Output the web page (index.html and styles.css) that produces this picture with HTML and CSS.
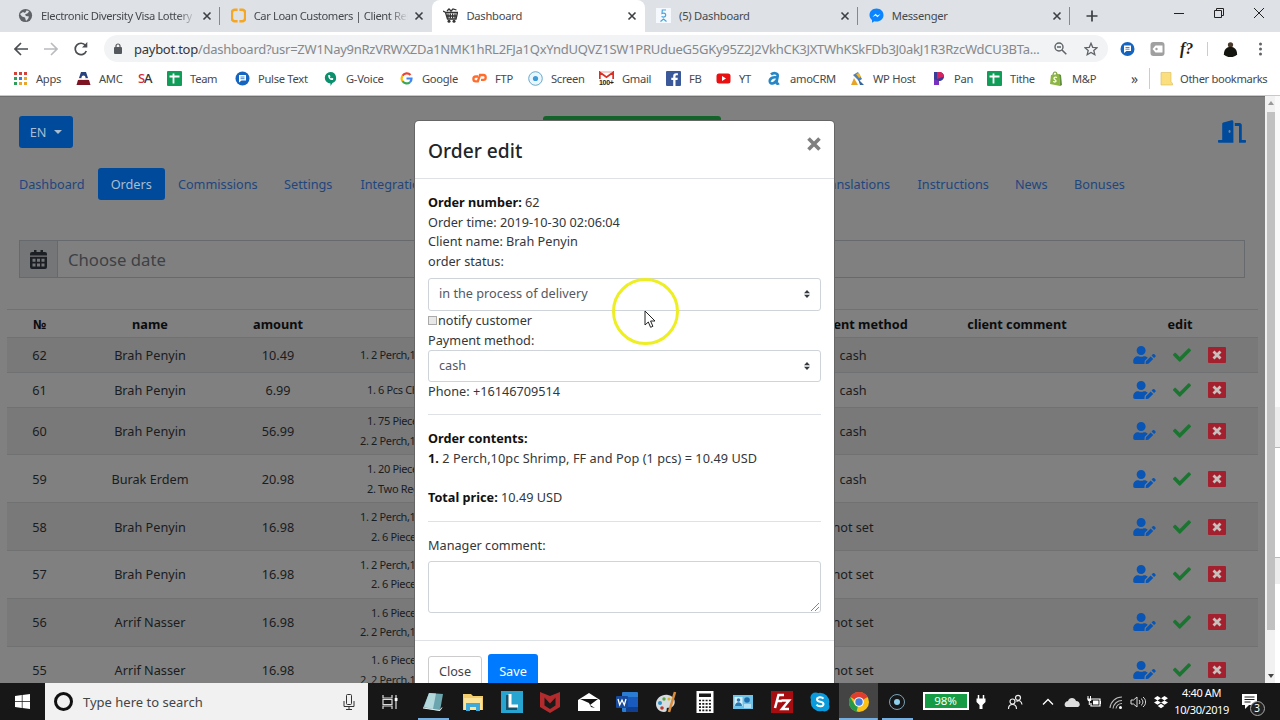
FILE: index.html
```html
<!DOCTYPE html>
<html lang="en">
<head>
    <meta charset="UTF-8">
    <meta name="viewport" content="width=device-width, initial-scale=1.0">
    <title>Dashboard</title>
    <link rel="stylesheet" href="styles.css">
</head>
<body>
    <svg class="sprite">
        <symbol id="user-edit" viewBox="0 0 640 512"><path d="M224 256c70.7 0 128-57.3 128-128S294.7 0 224 0 96 57.3 96 128s57.3 128 128 128zm89.6 32h-16.7c-22.2 10.2-46.9 16-72.9 16s-50.6-5.8-72.9-16h-16.7C60.2 288 0 348.2 0 422.4V464c0 26.5 21.5 48 48 48h274.9c-2.4-6.8-3.4-14-2.6-21.3l6.8-60.9 1.2-11.1 7.9-7.9 77.3-77.3c-24.5-27.7-60-45.5-99.9-45.5zm45.3 145.3l-6.8 61c-1.1 10.2 7.5 18.8 17.6 17.6l60.9-6.8 137.9-137.9-71.7-71.7-137.9 137.8zM633 268.9L595.1 231c-9.3-9.3-24.5-9.3-33.8 0l-37.8 37.8-4.1 4.1 71.8 71.7 41.8-41.8c9.3-9.4 9.3-24.5 0-33.9z"/></symbol>
        <symbol id="check" viewBox="0 0 512 512"><path d="M173.9 439.4l-166.4-166.4c-10-10-10-26.2 0-36.2l36.2-36.2c10-10 26.2-10 36.2 0L192 312.7 432.1 72.6c10-10 26.2-10 36.2 0l36.2 36.2c10 10 10 26.2 0 36.2l-294.4 294.4c-10 10-26.2 10-36.2 0z"/></symbol>
        <symbol id="remove" viewBox="0 0 18 16"><rect width="18" height="16" rx="1" fill="#a3202f"/><path d="M5.5 4.5l7 7M12.5 4.5l-7 7" stroke="#c9c0bd" stroke-width="2.8"/></symbol>
        <symbol id="tab-close" viewBox="0 0 10 10"><path d="M1.5 1.5l7 7M8.5 1.5l-7 7" stroke="#3c4043" stroke-width="1.6"/></symbol>
        <symbol id="sheet" viewBox="0 0 15 15"><rect width="15" height="15" rx="1" fill="#0f9d58"/><path d="M2.5 5.5h10M6.5 2.5v10" stroke="#fff" stroke-width="1.8"/></symbol>
        <symbol id="pulse" viewBox="0 0 15 15"><circle cx="7.500" cy="7.500" r="7" fill="#1565c0"/><path d="M4 4h7v5.500H6.500L4 11.500z" fill="#fff"/><path d="M5.500 6h4M5.500 7.700h4" stroke="#1565c0" stroke-width=".8"/></symbol>
        <symbol id="carets" viewBox="0 0 6 8"><path d="M3 0l3 3.300H0zM3 8L0 4.700h6z" fill="#343a40"/></symbol>
    </svg>

    <div class="desktop">
        <div class="tabs">
            <div class="tab">
                <svg class="favicon" viewBox="0 0 15 15"><circle cx="7.500" cy="7.500" r="6.600" fill="#5f6368"/><path d="M2 6l3-2 2 1 1.500-2.500L11 3l-1 2-3 1.500L8 8l3 .5-1 2.500-2 2-1-3.500-3-1z" fill="#dee1e6"/></svg>
                <span class="tab-title faded">Electronic Diversity Visa Lottery</span>
                <svg class="tab-x"><use href="#tab-close"/></svg>
            </div>
            <div class="tab">
                <svg class="favicon" viewBox="0 0 15 15"><rect x=".8" y="1.800" width="13.400" height="11.400" rx="3" fill="none" stroke="#f5a623" stroke-width="2.600"/><path d="M7.500 0v3.500M7.500 11.500V15" stroke="#dee1e6" stroke-width="1.800"/></svg>
                <span class="tab-title faded">Car Loan Customers | Client Rel</span>
                <svg class="tab-x"><use href="#tab-close"/></svg>
            </div>
            <div class="tab active">
                <svg class="favicon" viewBox="0 0 15 15"><path d="M0 3l3 1.500h11.500L13 11H4.500L2.500 4.500M4 3l2-2 2 2 2-2 3.500 1" fill="none" stroke="#333" stroke-width="1.300"/><path d="M5 5.500v5M7.300 5.500v5M9.600 5.500v5M12 5.500v5M4 8h9" stroke="#333" stroke-width="1.300"/><circle cx="6" cy="13.300" r="1.500" fill="#333"/><circle cx="11" cy="13.300" r="1.500" fill="#333"/></svg>
                <span class="tab-title">Dashboard</span>
                <svg class="tab-x"><use href="#tab-close"/></svg>
            </div>
            <div class="tab">
                <svg class="favicon" viewBox="0 0 15 15"><rect width="15" height="15" fill="#f5f9fd"/><path d="M10 2H6.300L6 5.500c2-1 4 0 3.700 1.800S7.500 9.500 5.500 8.500M4.500 13.500L7.500 11l3 2.500" fill="none" stroke="#4ba3dc" stroke-width="1.200"/></svg>
                <span class="tab-title">(5) Dashboard</span>
                <svg class="tab-x"><use href="#tab-close"/></svg>
            </div>
            <div class="tab">
                <svg class="favicon" viewBox="0 0 15 15"><path d="M7.500.5C3.500.5.5 3.400.5 7c0 2 1 3.700 2.500 5v2.700l2.400-1.400c4.800 1.200 9.100-1.800 9.100-6.300C14.500 3.400 11.500.5 7.500.5z" fill="#0a84ff"/><path d="M3.500 9l3-3.200 2 1.700L11.500 6l-3 3.200-2-1.700z" fill="#fff"/></svg>
                <span class="tab-title">Messenger</span>
                <svg class="tab-x"><use href="#tab-close"/></svg>
            </div>
            <svg class="new-tab" viewBox="0 0 12 12"><path d="M6 .5v11M.5 6h11" stroke="#3c4043" stroke-width="1.700"/></svg>
            <div class="window-buttons">
                <svg viewBox="0 0 10 10"><path d="M0 5.500h10" stroke="#222"/></svg>
                <svg viewBox="0 0 10 10"><path d="M.5 2.500h7v7h-7zM2.500 2.500v-2h7v7h-2" fill="none" stroke="#222"/></svg>
                <svg viewBox="0 0 10 10"><path d="M0 0l10 10M10 0L0 10" stroke="#222"/></svg>
            </div>
        </div>

        <div class="toolbar">
            <svg class="nav-icon" viewBox="0 0 14 14"><path d="M14 7H1.500M7 1L1 7l6 6" fill="none" stroke="#4a4d51" stroke-width="1.700"/></svg>
            <svg class="nav-icon" viewBox="0 0 14 14"><path d="M0 7h12.500M7 1l6 6-6 6" fill="none" stroke="#b9bbbe" stroke-width="1.600"/></svg>
            <svg class="nav-icon" viewBox="0 0 14 14"><path d="M12.300 9A5.700 5.700 0 1 1 11.500 3.500" fill="none" stroke="#4a4d51" stroke-width="1.700"/><path d="M13.300 0v5.500H8z" fill="#4a4d51"/></svg>
            <div class="address">
                <svg class="lock" viewBox="0 0 8 11"><rect y="4" width="8" height="7" rx="1" fill="#55585c"/><path d="M2 4.500V3a2 2 0 0 1 4 0v1.500" fill="none" stroke="#55585c" stroke-width="1.200"/></svg>
                <span class="url"><b>paybot.top</b>/dashboard?usr=ZW1Nay9nRzVRWXZDa1NMK1hRL2FJa1QxYndUQVZ1SW1PRUdueG5GKy95Z2J2VkhCK3JXTWhKSkFDb3J0akJ1R3RzcWdCU3BTa...</span>
                <svg class="zoom-icon" viewBox="0 0 13 13"><circle cx="5" cy="5" r="4" fill="none" stroke="#5f6368" stroke-width="1.400"/><path d="M3 5h4M8 8l4.300 4.300" stroke="#5f6368" stroke-width="1.500"/></svg>
                <svg class="star" viewBox="0 0 14 14"><path d="M7 1.300l1.700 4 4.300.4-3.200 2.800 1 4.200L7 10.500l-3.800 2.200 1-4.200L1 5.700l4.300-.4z" fill="none" stroke="#5f6368" stroke-width="1.300"/></svg>
            </div>
            <div class="extensions">
                <svg viewBox="0 0 15 15"><use href="#pulse"/></svg>
                <svg viewBox="0 0 15 15"><rect x=".5" y=".5" width="14" height="14" rx="3" fill="#a0a0a0"/><path d="M2.500 7.500L5.500 4h7v7h-7z" fill="#fff"/><circle cx="6.500" cy="7.500" r="1.200" fill="#a0a0a0"/></svg>
                <span class="ext-f">f?</span>
                <span class="divider"></span>
                <svg viewBox="0 0 15 17"><circle cx="7.500" cy="4" r="2.800" fill="#4b3a2a"/><path d="M.5 14c0-5 3-8 7-8s7 3 7 8c-2 4-12 4-14 0z" fill="#15150f"/></svg>
                <svg viewBox="0 0 15 15"><g fill="#5f6368"><circle cx="7.500" cy="2.500" r="1.500"/><circle cx="7.500" cy="7.500" r="1.500"/><circle cx="7.500" cy="12.500" r="1.500"/></g></svg>
            </div>
        </div>

        <div class="bookmarks">
            <div class="bm"><svg viewBox="0 0 15 15"><g fill="#d0433a"><rect x="1" y="1" width="3" height="3"/><rect x="6" y="1" width="3" height="3"/><rect x="11" y="1" width="3" height="3"/></g><rect x="1" y="6" width="3" height="3" fill="#2e9e58"/><rect x="6" y="6" width="3" height="3" fill="#3b78e7"/><rect x="11" y="6" width="3" height="3" fill="#e8a72b"/><rect x="1" y="11" width="3" height="3" fill="#2e9e58"/><g fill="#e8a72b"><rect x="6" y="11" width="3" height="3"/><rect x="11" y="11" width="3" height="3"/></g></svg>Apps</div>
            <div class="bm"><svg viewBox="0 0 15 15"><path d="M5 1h5l2 6H3z" fill="#27427c"/><path d="M3 7h9l1 3H2z" fill="#e8e0e0"/><path d="M2 9h11l1.500 5H.5z" fill="#7c1521"/><circle cx="7.500" cy="6.500" r="2" fill="#fff"/></svg>AMC</div>
            <div class="bm sa"><span>S</span>A</div>
            <div class="bm"><svg><use href="#sheet"/></svg>Team</div>
            <div class="bm"><svg><use href="#pulse"/></svg>Pulse Text</div>
            <div class="bm"><svg viewBox="0 0 15 15"><path d="M7.500 1a5.700 5.700 0 0 1 2 11l-2 3v-2.600A5.700 5.700 0 0 1 7.500 1z" fill="#0b8f6d"/><path d="M5.300 4c-.5 3 1.700 5.300 4.700 5l.3-1.500-1.500-.7-.8.7-1.200-1.200.7-.8L6.800 4z" fill="#fff"/></svg>G-Voice</div>
            <div class="bm"><svg viewBox="0 0 15 15" fill="none" stroke-width="2.200"><path d="M11.500 4A5 5 0 0 0 3.500 4.800" stroke="#ea4335"/><path d="M3.500 4.800a5 5 0 0 0 0 5.400" stroke="#fbbc05"/><path d="M3.500 10.200a5 5 0 0 0 7.500 1" stroke="#34a853"/><path d="M11 11.200a5 5 0 0 0 1.500-3.700H7.500" stroke="#4285f4"/></svg>Google</div>
            <div class="bm"><svg viewBox="0 0 15 15"><path d="M6 5.500H3.800a2.400 2.400 0 0 0 0 4.800h2L8 4h3.300a2.400 2.400 0 0 1 0 4.800H9" fill="none" stroke="#ff6c2c" stroke-width="2.300"/></svg>FTP</div>
            <div class="bm"><svg viewBox="0 0 15 15"><circle cx="7.500" cy="7.500" r="6.800" fill="#eaf6fc" stroke="#5b9fc5" stroke-width=".9"/><circle cx="7.500" cy="7.500" r="2.600" fill="#3d9bd8"/></svg>Screen</div>
            <div class="bm gmail"><svg viewBox="0 0 15 15"><path d="M.8 8V1.200l6.700 5 6.700-5V8" fill="none" stroke="#d93025" stroke-width="1.800"/><path d="M2 1h11" stroke="#e9a29c"/></svg><i>100+</i>Gmail</div>
            <div class="bm"><svg viewBox="0 0 15 15"><rect width="15" height="15" rx="1" fill="#3b5998"/><path d="M9.500 15V9h2l.3-2.200H9.500V5.500c0-.7.3-1.200 1.200-1.200h1.200V2.200h-1.700C8 2.200 7.200 3.500 7.200 5.200v1.600H5.300V9h1.900v6z" fill="#fff"/></svg>FB</div>
            <div class="bm"><svg viewBox="0 0 15 15"><rect x=".5" y="2.500" width="14" height="10" rx="2.500" fill="#e81010"/><path d="M6 5l4 2.500L6 10z" fill="#fff"/></svg>YT</div>
            <div class="bm"><svg viewBox="0 0 15 15"><path d="M4 3.500C6 1.500 11 1.500 10.700 5L9.500 11.500c0 1.500 1.500 1.500 2.500.8M10 6.500C6 5.500 2.500 7.500 2.800 10.500c.4 3 5 2.500 6.700-1.500" fill="none" stroke="#2585c5" stroke-width="2.600"/></svg>amoCRM</div>
            <div class="bm"><svg viewBox="0 0 15 15"><path d="M3 4l5-3 4 7-3 2z" fill="#4e7fb5"/><path d="M6 3l3-1 2 4-2 1z" fill="#f0b52d"/><path d="M1 14l3-7 4 7z" fill="#e7a528"/><path d="M8 8l6 6h-4z" fill="#35679c"/></svg>WP Host</div>
            <div class="bm"><svg viewBox="0 0 15 15"><path d="M3 1h5c3 0 5 2 5 4.500S11 10 8 10v4H3z" fill="#3b3b98"/><path d="M6 1h2c3 0 5 2 5 4.500L6 8z" fill="#d5245f"/><path d="M3 8l5 2v4H3z" fill="#7a2fc0"/></svg>Pan</div>
            <div class="bm"><svg><use href="#sheet"/></svg>Tithe</div>
            <div class="bm"><svg viewBox="0 0 15 15"><path d="M2 4l8-1 1 12-10-2z" fill="#8db543"/><path d="M10 3l2 1 1 10-2 1z" fill="#5e8e3e"/><path d="M4 4c0-4 4-4 4 0" fill="none" stroke="#7ba03a" stroke-width="1.200"/><path d="M8 6.500c-2-1-3 0-3 1 0 1.300 2.300 1.200 2 2.700-.2 1-2 1-2.800.2" fill="none" stroke="#fff" stroke-width="1.300"/></svg>M&amp;P</div>
            <div class="bm more">»</div>
            <div class="bm other"><svg viewBox="0 0 15 15"><path d="M2 1.500h10v9l1.500 2v1.500H2z" fill="#fbdf7e" stroke="#d9bb5d" stroke-width=".6"/></svg>Other bookmarks</div>
        </div>

        <div class="viewport">
            <div class="page">
                <div class="page-top">
                    <button class="lang">EN <span class="caret"></span></button>
                    <div class="create"></div>
                    <svg class="door" viewBox="0 0 640 512"><path d="M624 448h-80V113.500C544 86.200 522.500 64 496 64H384v64h96v384h144c8.800 0 16-7.200 16-16v-32c0-8.800-7.200-16-16-16zM312.200 1l-192 49.700C106 54.400 96 67.700 96 82.900V448H16c-8.800 0-16 7.200-16 16v32c0 8.800 7.200 16 16 16h336V33.200C352 11.600 332.400-4.200 312.200 1zM264 288c-13.300 0-24-14.300-24-32s10.700-32 24-32 24 14.300 24 32-10.700 32-24 32z"/></svg>
                </div>

                <div class="nav">
                    <a>Dashboard</a>
                    <a class="current">Orders</a>
                    <a>Commissions</a>
                    <a>Settings</a>
                    <a>Integrations</a>
                    <span></span>
                    <a>Translations</a>
                    <a>Instructions</a>
                    <a>News</a>
                    <a>Bonuses</a>
                </div>

                <div class="date-field">
                    <div class="date-icon"><svg viewBox="0 0 17 19"><path d="M2 2h2V0h2.500v2h4V0H13v2h2a2 2 0 0 1 2 2v1.500H0V4a2 2 0 0 1 2-2zM0 6.700h17V17a2 2 0 0 1-2 2H2a2 2 0 0 1-2-2z" fill="#1c2024"/><path d="M2.500 8.700h3v3h-3zM7 8.700h3v3H7zM11.500 8.700h3v3h-3zM2.500 13.500h3v3h-3zM7 13.500h3v3H7zM11.500 13.500h3v3h-3z" fill="#747678"/></svg></div>
                    <div class="date-input">Choose date</div>
                </div>

                <div class="orders">
                    <div class="row head"><div>№</div><div>name</div><div>amount</div><div></div><div>payment method</div><div>client comment</div><div>edit</div></div>
                    <div class="row odd"><div>62</div><div>Brah Penyin</div><div>10.49</div><div class="items"><p>1. 2 Perch,10</p></div><div>cash</div><div></div><div class="actions"><svg class="edit"><use href="#user-edit"/></svg><svg class="done"><use href="#check"/></svg><svg class="del"><use href="#remove"/></svg></div></div>
                    <div class="row"><div>61</div><div>Brah Penyin</div><div>6.99</div><div class="items"><p class="in-1">1. 6 Pcs Ch</p></div><div>cash</div><div></div><div class="actions"><svg class="edit"><use href="#user-edit"/></svg><svg class="done"><use href="#check"/></svg><svg class="del"><use href="#remove"/></svg></div></div>
                    <div class="row odd tall"><div>60</div><div>Brah Penyin</div><div>56.99</div><div class="items"><p class="in-1">1. 75 Piece</p><p>2. 2 Perch,1</p></div><div>cash</div><div></div><div class="actions"><svg class="edit"><use href="#user-edit"/></svg><svg class="done"><use href="#check"/></svg><svg class="del"><use href="#remove"/></svg></div></div>
                    <div class="row tall"><div>59</div><div>Burak Erdem</div><div>20.98</div><div class="items"><p class="in-1">1. 20 Piece</p><p class="in-1">2. Two Reg</p></div><div>cash</div><div></div><div class="actions"><svg class="edit"><use href="#user-edit"/></svg><svg class="done"><use href="#check"/></svg><svg class="del"><use href="#remove"/></svg></div></div>
                    <div class="row odd tall"><div>58</div><div>Brah Penyin</div><div>16.98</div><div class="items"><p>1. 2 Perch,1</p><p class="in-2">2. 6 Piece</p></div><div>not set</div><div></div><div class="actions"><svg class="edit"><use href="#user-edit"/></svg><svg class="done"><use href="#check"/></svg><svg class="del"><use href="#remove"/></svg></div></div>
                    <div class="row tall"><div>57</div><div>Brah Penyin</div><div>16.98</div><div class="items"><p>1. 2 Perch,1</p><p class="in-2">2. 6 Piece</p></div><div>not set</div><div></div><div class="actions"><svg class="edit"><use href="#user-edit"/></svg><svg class="done"><use href="#check"/></svg><svg class="del"><use href="#remove"/></svg></div></div>
                    <div class="row odd tall"><div>56</div><div>Arrif Nasser</div><div>16.98</div><div class="items"><p class="in-2">1. 6 Piece</p><p>2. 2 Perch,1</p></div><div>not set</div><div></div><div class="actions"><svg class="edit"><use href="#user-edit"/></svg><svg class="done"><use href="#check"/></svg><svg class="del"><use href="#remove"/></svg></div></div>
                    <div class="row tall"><div>55</div><div>Arrif Nasser</div><div>16.98</div><div class="items"><p class="in-2">1. 6 Piece</p><p>2. 2 Perch,1</p></div><div>not set</div><div></div><div class="actions"><svg class="edit"><use href="#user-edit"/></svg><svg class="done"><use href="#check"/></svg><svg class="del"><use href="#remove"/></svg></div></div>
                </div>
            </div>

            <div class="scrollbar">
                <span class="scroll-up"></span>
                <span class="thumb"></span>
                <span class="scroll-down"></span>
            </div>
            <div class="window-behind"></div>

            <div class="modal">
                <div class="modal-header">
                    <h5>Order edit</h5>
                    <svg class="modal-close" viewBox="0 0 14 14"><path d="M1.500 1.500l11 11M12.500 1.500l-11 11" stroke="#7f7f7f" stroke-width="3.600"/></svg>
                </div>
                <div class="modal-body">
                    <p><b>Order number:</b> 62</p>
                    <p>Order time: 2019-10-30 02:06:04</p>
                    <p>Client name: Brah Penyin</p>
                    <p>order status:</p>
                    <div class="select status">in the process of delivery<svg><use href="#carets"/></svg></div>
                    <p class="notify"><span class="checkbox"></span>notify customer</p>
                    <p>Payment method:</p>
                    <div class="select">cash<svg><use href="#carets"/></svg></div>
                    <p>Phone: +16146709514</p>
                    <hr>
                    <p><b>Order contents:</b></p>
                    <p class="content-line"><b>1.</b> 2 Perch,10pc Shrimp, FF and Pop (1 pcs) = 10.49 USD</p>
                    <p><b>Total price:</b> 10.49 USD</p>
                    <hr>
                    <p>Manager comment:</p>
                    <div class="comment"><svg viewBox="0 0 8 8"><path d="M0 8l8-8M4 8l4-4" stroke="#777" stroke-width=".9"/></svg></div>
                </div>
                <div class="modal-footer">
                    <button class="btn-close">Close</button>
                    <button class="btn-save">Save</button>
                </div>
            </div>

            <div class="click-ring"></div>
            <svg class="cursor" viewBox="0 0 12 19"><path d="M1 1v14l3.300-3 2.300 5.300 2.300-1L6.600 11H11z" fill="#fff" stroke="#222" stroke-width="1"/></svg>
        </div>

        <div class="taskbar">
            <div class="start"><svg viewBox="0 0 15 15"><path d="M0 2l6.800-1v6.200H0zM7.500.9L15 0v7.200H7.500zM0 7.900h6.800V14L0 13zM7.500 7.900H15V15l-7.500-1z" fill="#fff"/></svg></div>
            <div class="search">
                <span class="cortana"></span>
                <span class="search-text">Type here to search</span>
                <svg viewBox="0 0 12 16"><rect x="3.500" y=".5" width="5" height="10" rx="1" fill="none" stroke="#333"/><path d="M1 7v5.500h10V7M6 12.500v3M3 15.500h6" fill="none" stroke="#333"/></svg>
            </div>
            <div class="apps">
                <div><svg viewBox="0 0 16 16"><path d="M1 1v3h9V1M1 15v-3h9v3M1 5.500h9v5H1zM14 1v14" fill="none" stroke="#ddd" stroke-width="1.200"/><rect x="12.700" y="4" width="2.800" height="3" fill="#fff"/></svg></div>
                <div class="running"><svg class="big" viewBox="0 0 22 22"><path d="M7 2l14 1-3 17-17-3z" fill="#6ba5ae"/><path d="M7 2l7 .5L11 18 2 16z" fill="#b3d9dc"/><path d="M1 17l17 2.500 2-3" fill="none" stroke="#e8eded"/></svg></div>
                <div><svg class="big" viewBox="0 0 22 22"><path d="M1 3h8l2 2h10v14H1z" fill="#f3cd6b"/><path d="M2 7h18v12H2z" fill="#fbe39a"/><path d="M4 20v-8h14v8h-4v-4H8v4z" fill="#3fa9d9"/></svg></div>
                <div><svg class="big" viewBox="0 0 22 22"><rect width="22" height="22" fill="#27a4cf"/><path d="M7 4v13h9" fill="none" stroke="#17546b" stroke-width="4"/><path d="M9 3v12h8" fill="none" stroke="#fff" stroke-width="3"/></svg></div>
                <div><svg class="big" viewBox="0 0 22 22"><path d="M1 1l10 4 10-4v15l-10 6-10-6z" fill="#b32b2d"/><path d="M5.500 6.500l5.500 4 5.500-4v8L11 18l-5.500-3.500z" fill="#1a1a1a"/><path d="M5.500 6.500l5.500 2.500 5.500-2.500-5.500 6z" fill="#b32b2d"/></svg></div>
                <div><svg class="big" viewBox="0 0 22 20"><path d="M0 8l11-7 11 7v11H0z" fill="#fff"/><path d="M2 7h18l-8 6-1-2zM12 13l5 3-4-1z" fill="#111"/></svg></div>
                <div><svg class="big" viewBox="0 0 22 22"><rect x="6" y="1" width="16" height="20" rx="1" fill="#2b7cd3"/><path d="M6 6h16v10H6z" fill="#185abd"/><path d="M10 16h12v5H10z" fill="#103f91"/><rect y="5" width="12" height="12" rx="1" fill="#174a9c"/><path d="M2 8l1.700 6L6 9l2.300 5L10 8" fill="none" stroke="#fff" stroke-width="1.300"/></svg></div>
                <div><svg class="big" viewBox="0 0 22 22"><path d="M1 13C1 7 7 3 13 4s8 6 6 10-6 2-7 3 1 4-3 4c-5 0-8-4-8-8z" fill="#d5dce0"/><circle cx="5" cy="12" r="2" fill="#2a8fc7"/><circle cx="9" cy="8" r="1.700" fill="#5aa546"/><circle cx="14" cy="8" r="1.600" fill="#d9b42a"/><circle cx="7" cy="17" r="1.800" fill="#c0392b"/><path d="M20 1L14 21" stroke="#d98c3b" stroke-width="2.600"/></svg></div>
                <div><svg class="big" viewBox="0 0 22 22"><rect x="2.500" width="17" height="22" fill="#fff"/><rect x="5" y="2.500" width="12" height="3.500" fill="#1a1a1a"/><path d="M5 9.500h12M5 12.800h12M5 16.100h12M5 19.400h12" stroke="#1a1a1a" stroke-width="1.700" stroke-dasharray="2 1.300"/></svg></div>
                <div><svg class="big" viewBox="0 0 22 22"><rect x="1" y="4" width="20" height="14" fill="#6fc3e8"/><rect x="2.500" y="6" width="8" height="9" fill="#d7eefa"/><circle cx="6.500" cy="9" r="1.800" fill="#2979b0"/><path d="M3 15c0-5 7-5 7 0z" fill="#2979b0"/><circle cx="15" cy="9" r="2.800" fill="#1f6fae"/><path d="M12 14h7M12 16h7" stroke="#fff"/></svg></div>
                <div><svg class="big" viewBox="0 0 22 22"><rect width="22" height="22" fill="#a50d10"/><path d="M13 4H7.500L4 17M6 10h5M10.500 9.500H18l-7 8.500h7" fill="none" stroke="#fff" stroke-width="2.500"/></svg></div>
                <div><svg class="big" viewBox="0 0 22 22"><circle cx="11" cy="11" r="9.300" fill="#0a9bdc"/><circle cx="6.500" cy="6.500" r="5" fill="#0a9bdc"/><circle cx="15.500" cy="15.500" r="5" fill="#0a9bdc"/><path d="M14.500 7.700c-2-2.500-6.500-1.700-6.500.8 0 3 6.500 1.500 6.500 4.500 0 2.700-5 3.200-7 .6" fill="none" stroke="#fff" stroke-width="2"/></svg></div>
                <div class="running front"><svg class="big" viewBox="0 0 22 22"><circle cx="11" cy="11" r="10" fill="#fbc116"/><path d="M11 11L2.300 6A10 10 0 0 1 19.700 6z" fill="#df3d30"/><path d="M11 11l-2.500 9.700A10 10 0 0 1 2.300 6L7 14z" fill="#279847"/><circle cx="11" cy="11" r="4.800" fill="#fff"/><circle cx="11" cy="11" r="3.700" fill="#3f7de0"/></svg></div>
                <div class="running"><svg class="big" viewBox="0 0 22 22"><circle cx="11" cy="11" r="7.500" fill="none" stroke="#7aa1b5"/><circle cx="11" cy="11" r="3" fill="#8ed1ee"/></svg></div>
            </div>
            <div class="battery">98%</div>
            <div class="tray">
                <svg viewBox="0 0 16 16"><path d="M5.500 1v4M10.500 1v4" stroke="#fff" stroke-width="1.500"/><path d="M3.500 4.500h9V8l-3 3v4h-3v-4l-3-3z" fill="#fff"/></svg>
                <svg viewBox="0 0 16 16"><g fill="none" stroke="#eee" stroke-width="1.200"><circle cx="5.500" cy="7.500" r="2.500"/><path d="M1.500 15c0-6 8-6 8 0"/><circle cx="11" cy="3.800" r="2.500"/><path d="M9.500 7.500c3-2 5 0 5.500 3"/></g></svg>
                <svg viewBox="0 0 16 16"><path d="M3 10.500l5-5 5 5" fill="none" stroke="#fff" stroke-width="1.300"/></svg>
                <svg viewBox="0 0 16 16"><path d="M1 12a3.500 3.500 0 0 1 3-5c1-4 7-4 8 0 4 0 5 5 2 6H2z" fill="#ddd"/></svg>
                <svg viewBox="0 0 16 16"><path d="M6 5h8v7H5V9" fill="none" stroke="#fff" stroke-width="1.200"/><path d="M7 6.500h5.500v4H7z" fill="#fff"/><path d="M14.500 7v3M2 2v3M4.500 2v3M3.300 7v4" stroke="#fff"/><path d="M1 4.500h5L5 7H2z" fill="#fff"/></svg>
                <svg viewBox="0 0 16 16"><g fill="none" stroke="#bbb" stroke-width="1.100"><path d="M2 14A12 12 0 0 1 14 3M5 14.500A9 9 0 0 1 14 6.500M8 14.500a6 6 0 0 1 6-5"/></g><circle cx="12.500" cy="13.500" r="1.500" fill="#fff"/></svg>
                <svg viewBox="0 0 16 16"><path d="M1 6h2.500L7 3v10l-3.500-3H1zM9 6c1.200 1 1.200 3 0 4M11 4.500c2.500 2 2.500 5 0 7M13 3c3.500 3 3.500 7 0 10" fill="none" stroke="#ddd"/></svg>
                <svg viewBox="0 0 16 16"><path d="M4.500 2L8 4.200 4.500 6.400 1 4.200zM11.500 2L15 4.200l-3.500 2.200L8 4.200zM4.500 6.400L8 8.600l-3.500 2.200L1 8.600zM11.500 6.400L15 8.600l-3.500 2.200L8 8.600zM8 9.800l3.300 2.200L8 14.200 4.700 12z" fill="#fff"/></svg>
            </div>
            <div class="clock">4:40 AM<br>10/30/2019</div>
            <div class="notifications"><svg viewBox="0 0 17 17"><path d="M1 1h15v11H8l-4 4v-4H1z" fill="#fff"/><path d="M3.500 4h10M3.500 6.500h10M3.500 9h6" stroke="#1a1a1a"/></svg><span>3</span></div>
        </div>
    </div>
</body>
</html>
```
FILE: styles.css
```css
* {
    box-sizing: border-box;
}

body {
    margin: 0;
    font-family: 'Noto Sans', 'Open Sans', sans-serif;
    font-size: 12.7px;
    color: #212529;
}

p, h5 {
    margin: 0;
}

button {
    font: inherit;
    border: none;
    border-radius: 3px;
    padding: 0;
}

.sprite {
    display: none;
}

.desktop {
    width: 1280px;
    height: 720px;
    display: flex;
    flex-direction: column;
    overflow: hidden;
    background: #fff;
}

/* browser tabs */
.tabs {
    height: 32px;
    flex: none;
    background: #dee1e6;
    display: flex;
    align-items: center;
    padding: 0 0 1px 7px;
    font-size: 11.2px;
    letter-spacing: -0.25px;
    color: #45494d;
}

.tab {
    width: 212.7px;
    height: 32px;
    display: flex;
    align-items: center;
    padding: 0 8px 0 11px;
    background: linear-gradient(#888, #888) right center / 1px 18px no-repeat;
}

.tab:nth-child(2) {
    background: none;
}

.tab.active {
    background: #fff;
    border-radius: 8px 8px 0 0;
}

.favicon {
    width: 15px;
    height: 15px;
    flex: none;
    margin-right: 8px;
}

.tab-title {
    flex: 1;
    white-space: nowrap;
    overflow: hidden;
}

.tab-title.faded {
    margin-right: 6px;
    letter-spacing: -0.4px;
    mask-image: linear-gradient(to right, #000 88%, transparent);
}

.tab-x {
    width: 10px;
    height: 10px;
    flex: none;
}

.new-tab {
    width: 12px;
    height: 12px;
    margin-left: 16px;
}

.window-buttons {
    margin-left: auto;
    display: flex;
    gap: 30px;
    padding: 0 16px 5px 0;
}

.window-buttons svg {
    width: 10px;
    height: 10px;
}

/* toolbar */
.toolbar {
    height: 33px;
    flex: none;
    display: flex;
    align-items: center;
    padding-left: 14px;
}

.nav-icon {
    width: 14px;
    height: 14px;
    margin-right: 16px;
}

.address {
    width: 1004px;
    height: 27px;
    border-radius: 14px;
    background: #f1f3f4;
    display: flex;
    align-items: center;
    padding: 0 10px;
}

.lock {
    width: 8px;
    height: 11px;
    margin-right: 12px;
}

.url {
    width: 920px;
    font-size: 13px;
    letter-spacing: -0.26px;
    white-space: nowrap;
    color: #85888c;
}

.url b {
    font-weight: normal;
    color: #333639;
}

.zoom-icon {
    width: 13px;
    height: 13px;
    margin-right: 17px;
}

.star {
    width: 14px;
    height: 14px;
}

.extensions {
    margin-left: 12px;
    display: flex;
    align-items: center;
    gap: 15px;
}

.extensions svg {
    width: 15px;
    height: 16px;
}

.ext-f {
    width: 16px;
    font: italic bold 16px 'Liberation Serif', serif;
    color: #222;
}

.divider {
    width: 1px;
    height: 14px;
    background: #ccc;
    margin-left: -4px;
}

/* bookmarks bar */
.bookmarks {
    height: 31px;
    flex: none;
    display: grid;
    grid-template-columns: 63px 61px 30px 68px 88px 76px 73px 56px 71px 67px 50px 51px 83px 81px 56px 62px 79px 27px 120px;
    padding-left: 13px;
    font-size: 11.2px;
    letter-spacing: -0.3px;
    color: #45494d;
    white-space: nowrap;
    border-bottom: 1px solid #c8c8c8;
}

.bm {
    position: relative;
    display: flex;
    align-items: center;
    padding-bottom: 4px;
}

.bm svg {
    width: 15px;
    height: 15px;
    margin-right: 8px;
    flex: none;
}

.bm.sa {
    padding-left: 1px;
    font-size: 13px;
    letter-spacing: -1.2px;
    font-weight: 500;
    color: #333;
}

.bm.sa span {
    color: #d22b3c;
}

.bm.gmail i {
    position: absolute;
    left: 0;
    top: 14px;
    font: bold 7px/8px 'Liberation Sans', sans-serif;
    color: #222;
}

.bm.more {
    padding-left: 3px;
    font-size: 14px;
}

.bm.other {
    padding-left: 9px;
    margin: 3px 0 6px -6px;
    padding-bottom: 0;
    letter-spacing: -0.35px;
    border-left: 1px solid #ccc;
}

.bm.other svg {
    margin-right: 6px;
}

/* page under the dark backdrop */
.viewport {
    height: 587px;
    flex: none;
    display: flex;
    position: relative;
    overflow: hidden;
}

.page {
    width: 1265px;
    background: #808080;
    overflow: hidden;
    border-top: 1px solid #6e6e6e;
}

.page-top {
    display: flex;
    height: 71px;
    padding: 19px 19px 0;
    align-items: flex-start;
}

.lang {
    width: 54px;
    height: 32px;
    background: #004a9c;
    color: #a9bcd0;
    display: flex;
    align-items: center;
    justify-content: center;
    gap: 8px;
}

.caret {
    border: 4px solid transparent;
    border-top-color: #a9bcd0;
    border-bottom: none;
}

.create {
    width: 178px;
    height: 32px;
    margin-left: 470px;
    border-radius: 3px;
    background: #14632b;
}

.door {
    width: 28px;
    height: 23px;
    margin: 4px 0 0 auto;
    fill: #004a9c;
}

.nav {
    width: 1132px;
    margin-left: 6px;
    height: 32px;
    display: grid;
    grid-template-columns: 91.5px 67.5px 105.5px 75.5px 102px 1fr 102px 96.5px 59.5px 77px;
    align-items: center;
    text-align: center;
    color: #1f467e;
}

.nav .current {
    background: #004a9c;
    color: #a9bcd0;
    border-radius: 3px;
    line-height: 32px;
}

.date-field {
    margin: 40px 20px 0 19px;
    height: 38px;
    display: flex;
    border: 1px solid #676a6d;
}

.date-icon {
    width: 38px;
    background: #747678;
    border-right: 1px solid #676a6d;
    display: flex;
    align-items: center;
    justify-content: center;
}

.date-icon svg {
    width: 17px;
    height: 19px;
}

.date-input {
    padding-left: 10px;
    font-size: 16.7px;
    line-height: 38px;
    color: #3d4145;
}

.orders {
    margin: 31px 7px 0;
    color: #1a1c1f;
}

.row {
    height: 34.7px;
    display: grid;
    grid-template-columns: 65px 156px 100px 446px 158px 170px 156px;
    align-items: center;
    text-align: center;
    border-top: 1px solid #6f7173;
    white-space: nowrap;
}

.row.head {
    height: 28.3px;
    font-weight: bold;
    color: #0b0c0e;
}

.row.odd {
    background: #797979;
}

.row.tall {
    height: 47.8px;
}

.items {
    width: 86px;
    padding-left: 32px;
    overflow: hidden;
    text-align: left;
    font-size: 11px;
    letter-spacing: -0.35px;
    line-height: 19.7px;
}

.in-1 {
    padding-left: 7px;
}

.in-2 {
    padding-left: 11px;
}

.actions {
    display: flex;
    align-items: center;
    justify-content: center;
    gap: 17px;
    padding-right: 2px;
}

.edit {
    width: 23px;
    height: 18px;
    fill: #0855b5;
}

.done {
    width: 18px;
    height: 18px;
    fill: #1b7531;
}

.del {
    width: 18px;
    height: 16px;
}

.scrollbar {
    width: 10px;
    padding: 5px 0 5px 2px;
    background: #f1f1f1;
    display: flex;
    flex-direction: column;
    align-items: center;
}

.scroll-up {
    border: 3px solid transparent;
    border-bottom: 4px solid #999;
    border-top: none;
    margin-bottom: 7px;
}

.thumb {
    width: 8px;
    height: 518px;
    background: #c1c1c1;
}

.scroll-down {
    margin-top: auto;
    border: 3px solid transparent;
    border-top: 4px solid #444;
    border-bottom: none;
}

.window-behind {
    width: 5px;
    background: linear-gradient(#fafafa 311px, #eee 311px 351px, #bbb 351px 352px, #fff 352px 461px, #bbb 461px 462px, #eee 462px 488px, #fff 488px);
}

/* order dialog */
.modal {
    position: absolute;
    left: 415px;
    top: 25px;
    width: 419px;
    height: 600px;
    background: #fff;
    border-radius: 4px;
    box-shadow: 0 0 0 1px #666;
    color: #33373b;
}

.modal-header {
    height: 58px;
    padding: 0 13px;
    display: flex;
    justify-content: space-between;
    border-bottom: 1px solid #dee2e6;
}

.modal-header h5 {
    font-size: 19.2px;
    font-weight: 500;
    line-height: 59px;
    color: #212529;
}

.modal-close {
    width: 14px;
    height: 14px;
    margin-top: 16px;
}

.modal-body {
    height: 462px;
    padding: 14px 13px 0;
    line-height: 19.7px;
    border-bottom: 1px solid #dee2e6;
}

.modal-body b {
    color: #111;
}

.select {
    height: 32px;
    padding: 0 10px;
    display: flex;
    align-items: center;
    justify-content: space-between;
    border: 1px solid #ced4da;
    border-radius: 3px;
    color: #53595f;
}

.select.status {
    margin: 6px 0 0;
    height: 33px;
}

.select svg {
    width: 6px;
    height: 8px;
}

.notify {
    display: flex;
    align-items: center;
}

.checkbox {
    width: 9px;
    height: 9px;
    margin-right: 1px;
    border: 1px solid #aaa;
    background: #e8e8e8;
}

hr {
    margin: 12px 0 14px;
    border: none;
    border-top: 1px solid #dee2e6;
}

.content-line {
    margin-bottom: 19.7px;
    letter-spacing: 0.07px;
}

.content-line + p + hr {
    margin-top: 13px;
}

.comment {
    height: 52px;
    margin-top: 6px;
    padding: 0 1px 1px 0;
    display: flex;
    align-items: flex-end;
    justify-content: flex-end;
    border: 1px solid #ced4da;
    border-radius: 3px;
}

.comment svg {
    width: 8px;
    height: 8px;
}

.modal-footer {
    padding: 13px 13px;
    display: flex;
    align-items: center;
    gap: 6px;
}

.btn-close {
    width: 54px;
    height: 30px;
    background: #fff;
    border: 1px solid #ccc;
    color: #444;
}

.btn-save {
    width: 50px;
    height: 33px;
    background: #007bff;
    color: #fff;
}

.click-ring {
    position: absolute;
    left: 612px;
    top: 182px;
    width: 67px;
    height: 67px;
    border: 3px solid #eeee24;
    border-radius: 50%;
}

.cursor {
    position: absolute;
    left: 644px;
    top: 214px;
    width: 12px;
    height: 19px;
}

/* taskbar */
.taskbar {
    height: 37px;
    flex: none;
    display: flex;
    background: #171717;
    color: #fff;
}

.start {
    width: 45px;
    display: flex;
    align-items: center;
    justify-content: center;
}

.start svg {
    width: 15px;
    height: 15px;
}

.search {
    width: 323px;
    background: #f1f1f1;
    display: flex;
    align-items: center;
    padding: 0 13px 0 9px;
    color: #444;
}

.cortana {
    width: 19px;
    height: 19px;
    border: 3px solid #111;
    border-radius: 50%;
    margin-right: 10px;
}

.search-text {
    flex: 1;
    font-size: 13px;
}

.search svg {
    width: 12px;
    height: 16px;
}

.apps {
    display: grid;
    grid-template-columns: 44px 42px repeat(12, 38.55px);
}

.apps div {
    display: flex;
    align-items: center;
    justify-content: center;
}

.apps svg {
    width: 16px;
    height: 16px;
}

.apps svg.big {
    width: 22px;
    height: 22px;
}

.apps .running {
    background: linear-gradient(#76aee0, #76aee0) center bottom / 31px 2px no-repeat;
}

.apps .running.front {
    background-color: #444;
    background-size: 100% 2px;
}

.battery {
    width: 46px;
    height: 18px;
    margin: 9px 0 0 6px;
    border: 2px solid #fff;
    background: #169b45;
    font-size: 11.5px;
    line-height: 14px;
    text-align: center;
}

.tray {
    display: grid;
    grid-template-columns: 28px 40px 26px 22px 22px 22px 23px 23px;
    align-items: center;
    justify-items: center;
    margin-left: -2px;
}

.tray svg {
    width: 16px;
    height: 16px;
}

.clock {
    width: 58px;
    text-align: center;
    font-size: 11px;
    letter-spacing: -0.4px;
    line-height: 17px;
    padding-top: 1px;
}

.notifications {
    position: relative;
    padding: 10px 0 0 10px;
}

.notifications svg {
    width: 17px;
    height: 17px;
}

.notifications span {
    position: absolute;
    left: 19px;
    top: 18px;
    width: 15px;
    height: 15px;
    border: 1px solid #aaa;
    border-radius: 50%;
    background: #222;
    font-size: 10px;
    line-height: 13px;
    text-align: center;
}
```
